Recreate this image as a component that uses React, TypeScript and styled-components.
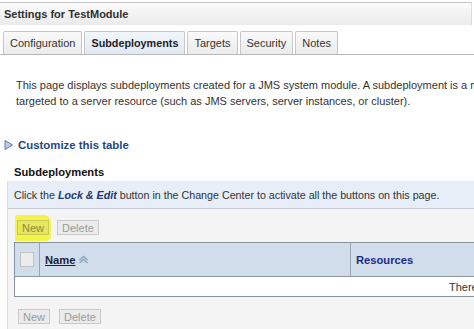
import styled, { createGlobalStyle } from 'styled-components'

const GlobalStyle = createGlobalStyle`
  body {
    margin: 0;
    background: #ffffff;
    font-family: "Liberation Sans", Arial, sans-serif;
    font-size: 11px;
    color: #333333;
    overflow: hidden;
  }
`

const Page = styled.div`
  width: 474px;
  height: 329px;
  padding-top: 2px;
  box-sizing: border-box;
  overflow: hidden;
`

const TitleBar = styled.div`
  width: 472px;
  height: 23px;
  box-sizing: border-box;
  display: flex;
  align-items: center;
  padding-left: 4px;
  border-top: 1px solid #c4c4c4;
  border-right: 1px solid #dcdcdc;
  background: linear-gradient(#fbfbfb, #ebebeb);
  font-weight: bold;
  font-size: 11px;
  color: #2f2f2f;
`

const TabRow = styled.div`
  display: flex;
  gap: 2px;
  margin-top: 5px;
  padding-left: 3px;
  height: 24px;
  border-bottom: 1px solid #b9b9b9;
`

const Tab = styled.div<{ $active?: boolean }>`
  height: 23px;
  margin-top: 1px;
  box-sizing: border-box;
  display: flex;
  align-items: center;
  padding: 0 6px;
  border: 1px solid #c6c6c6;
  border-bottom: none;
  border-radius: 2px 2px 0 0;
  background: ${(p) =>
    p.$active ? 'linear-gradient(#f1f6fb, #dfe9f4)' : 'linear-gradient(#fafafa, #ebebeb)'};
  font-weight: ${(p) => (p.$active ? 'bold' : 'normal')};
  font-size: ${(p) => (p.$active ? '10.8px' : '11px')};
  color: ${(p) => (p.$active ? '#1f1f1f' : '#333333')};
`

const Description = styled.p`
  margin: 22px 0 0 16px;
  line-height: 16px;
  font-size: 11px;
  white-space: nowrap;
`

const CustomizeLink = styled.div`
  display: flex;
  align-items: center;
  gap: 5px;
  margin: 30px 0 0 4px;
  font-weight: bold;
  font-size: 11.4px;
  color: #1d4885;
`

const SectionTitle = styled.div`
  margin: 15px 0 0 14px;
  font-weight: bold;
  font-size: 11.2px;
  color: #111111;
`

const Panel = styled.div`
  margin: 3px 0 0 7px;
  width: 466px;
  border-left: 1px solid #dcdcdc;
  border-right: 1px solid #dcdcdc;
  background: #f4f4f4;
  height: 160px;
`

const InfoBar = styled.div`
  height: 27px;
  display: flex;
  align-items: center;
  padding-left: 6px;
  background: #e7eef8;
  border-bottom: 1px solid #c6ccd5;
  white-space: nowrap;
  font-size: 10.7px;
`

const Emph = styled.span`
  font-weight: bold;
  font-style: italic;
  color: #1c3775;
`

const ButtonRow = styled.div<{ $top: number }>`
  display: flex;
  gap: 9px;
  margin: ${(p) => p.$top}px 0 0 10px;
`

/* yellow marker stroke drawn over the first New button */
const Highlight = styled.div`
  margin: -5px -3px -6px;
  padding: 5px 2px 6px;
  background: #f3f34a;
  border-radius: 2px 7px 5px 2px;
`

const Button = styled.div<{ $lit?: boolean }>`
  height: 15px;
  box-sizing: border-box;
  display: flex;
  align-items: center;
  padding: 0 4px;
  border: 1px solid ${(p) => (p.$lit ? '#c9c95a' : '#c9c9c9')};
  background: ${(p) => (p.$lit ? '#e6e660' : '#ebebeb')};
  color: ${(p) => (p.$lit ? '#8c8c3c' : '#9a9a9a')};
  font-size: 11px;
`

const Table = styled.div`
  margin: 7px 0 0 6px;
  width: 560px;
  border: 1px solid #8a929c;
  border-right: none;
`

const HeaderRow = styled.div`
  display: grid;
  grid-template-columns: 24px 311px 1fr;
  height: 33px;
  background: #d2ddeb;
  border-bottom: 1px solid #8e98a4;
`

const HeadCell = styled.div<{ $first?: boolean }>`
  display: flex;
  align-items: center;
  gap: 3px;
  padding-left: 5px;
  border-left: ${(p) => (p.$first ? 'none' : '1px solid #9aa4b0')};
  font-weight: bold;
  font-size: 11.2px;
  color: #1c2a86;
`

const CheckBox = styled.div`
  width: 12px;
  height: 13px;
  border: 1px solid #c2c2c2;
  background: #ececec;
`

const SortLink = styled.span`
  color: #1a2440;
  text-decoration: underline;
`

const BodyRow = styled.div`
  height: 19px;
  display: flex;
  align-items: center;
  padding-left: 434px;
  background: #ffffff;
  white-space: nowrap;
`

const SortIcon = () => (
  <svg width="11" height="9" viewBox="0 0 11 9">
    <path d="M1.5 5 L5.5 1.5 L9.5 5" fill="none" stroke="#8ea3c4" strokeWidth="1.4" />
    <path d="M1.5 8 L5.5 4.5 L9.5 8" fill="none" stroke="#8ea3c4" strokeWidth="1.4" />
  </svg>
)

const Triangle = () => (
  <svg width="9" height="10" viewBox="0 0 9 10">
    <path d="M1 0.5 L8.5 5 L1 9.5 Z" fill="#b9cbe3" stroke="#5b7fb0" strokeWidth="1" />
  </svg>
)

export default function App() {
  return (
    <Page>
      <GlobalStyle />
      <TitleBar>Settings for TestModule</TitleBar>
      <TabRow>
        <Tab>Configuration</Tab>
        <Tab $active>Subdeployments</Tab>
        <Tab>Targets</Tab>
        <Tab>Security</Tab>
        <Tab>Notes</Tab>
      </TabRow>
      <Description>
        This page displays subdeployments created for a JMS system module. A subdeployment is a mechanism by which JMS module resources are grouped and
        <br />
        targeted to a server resource (such as JMS servers, server instances, or cluster).
      </Description>
      <CustomizeLink>
        <Triangle />
        Customize this table
      </CustomizeLink>
      <SectionTitle>Subdeployments</SectionTitle>
      <Panel>
        <InfoBar>
          Click the&nbsp;<Emph>Lock &amp; Edit</Emph>&nbsp;button in the Change Center to activate all the buttons on this page.
        </InfoBar>
        <ButtonRow $top={11}>
          <Highlight>
            <Button $lit>New</Button>
          </Highlight>
          <Button>Delete</Button>
        </ButtonRow>
        <Table>
          <HeaderRow>
            <HeadCell $first>
              <CheckBox />
            </HeadCell>
            <HeadCell>
              <SortLink>Name</SortLink>
              <SortIcon />
            </HeadCell>
            <HeadCell>Resources</HeadCell>
          </HeaderRow>
          <BodyRow>There are no items to display</BodyRow>
        </Table>
        <ButtonRow $top={12}>
          <Button>New</Button>
          <Button>Delete</Button>
        </ButtonRow>
      </Panel>
    </Page>
  )
}
